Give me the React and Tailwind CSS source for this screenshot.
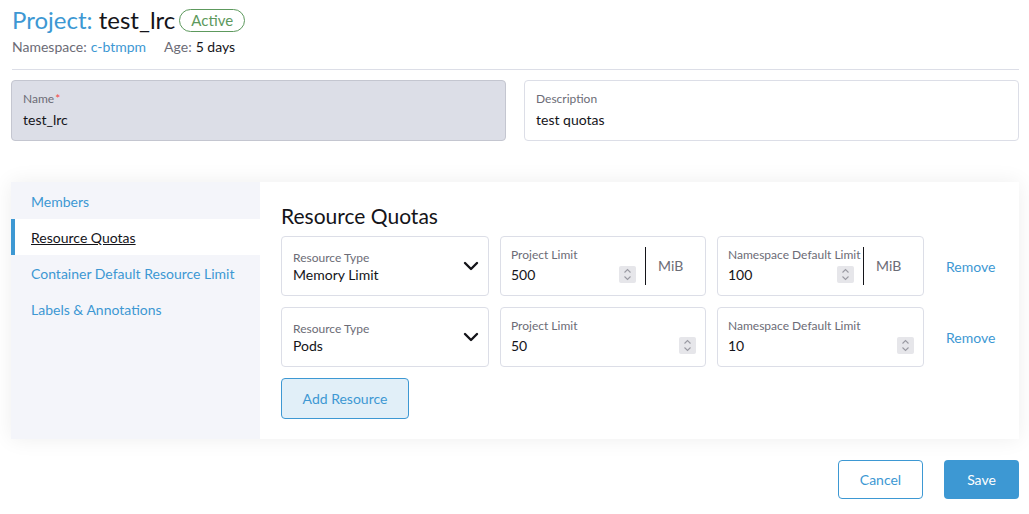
import React from "react";

const Spinner = () => (
  <span className="flex flex-col items-center justify-center w-[17px] h-[17px] bg-[#e6e6ea] rounded-[2px] shrink-0">
    <svg width="9" height="13" viewBox="0 0 9 13" fill="none" stroke="#9a9aa2" strokeWidth="1.1">
      <path d="M1.5 4.5 L4.5 1.5 L7.5 4.5" />
      <path d="M1.5 8.5 L4.5 11.5 L7.5 8.5" />
    </svg>
  </span>
);

const Chevron = () => (
  <svg width="16" height="10" viewBox="0 0 16 10" fill="none" stroke="#141419" strokeWidth="2.4" strokeLinecap="round" strokeLinejoin="round">
    <path d="M2 2 L8 8 L14 2" />
  </svg>
);

const SelectBox = ({ value }) => (
  <div className="w-[208px] h-[60px] border border-[#dcdee7] rounded-[4px] flex items-center justify-between pl-[11px] pr-[9px] bg-white">
    <div className="pt-[3px]">
      <div className="text-[12px] leading-[15px] text-[#6c6c76]">Resource Type</div>
      <div className="text-[14px] leading-[20px] text-[#141419]">{value}</div>
    </div>
    <Chevron />
  </div>
);

const NumberBox = ({ label, value, unit, width }) => (
  <div className={`${width} h-[60px] border border-[#dcdee7] rounded-[4px] flex items-stretch bg-white`}>
    <div className="flex-1 min-w-0 flex pl-[10px] pr-[9px]">
      <div className="flex-1 min-w-0 pt-[10px]">
        <div className="text-[12px] leading-[15px] text-[#6c6c76] whitespace-nowrap">{label}</div>
        <div className="text-[14px] leading-[26px] text-[#141419]">{value}</div>
      </div>
      <div className="pt-[29px]">
        <Spinner />
      </div>
    </div>
    {unit && (
      <div className="w-[60px] shrink-0 flex items-center my-[10px] border-l border-[#141419] pl-[12px] text-[14px] text-[#6c6c76]">
        <span className="-mt-[1px]">{unit}</span>
      </div>
    )}
  </div>
);

const QuotaRow = ({ type, project, ns, unit }) => (
  <div className="flex items-center gap-[11px]">
    <SelectBox value={type} />
    <NumberBox label="Project Limit" value={project} unit={unit} width="w-[206px]" />
    <NumberBox label="Namespace Default Limit" value={ns} unit={unit} width="w-[207px]" />
    <a className="ml-[11px] text-[14px] text-[#3d98d3] cursor-pointer">Remove</a>
  </div>
);

export default function App() {
  const tabs = ["Members", "Resource Quotas", "Container Default Resource Limit", "Labels & Annotations"];

  return (
    <div className="w-[1029px] h-[514px] bg-white font-['Lato','Noto_Sans',sans-serif] text-[#141419] pl-[11px] pr-[10px] overflow-hidden">
      {/* Header */}
      <div className="flex items-center pt-[4px] pl-[1px]">
        <h1 className="text-[24px] leading-[32px]">
          <span className="text-[#3d98d3]">Project: </span>
          <span>test_lrc</span>
        </h1>
        <span className="ml-[4px] border border-[#5d995d] text-[#5d995d] rounded-full px-[11px] text-[15px] leading-[21px]">
          Active
        </span>
      </div>
      <div className="flex text-[14px] leading-[18px] mt-[2px] pl-[1px]">
        <span className="text-[#6c6c76]">Namespace:</span>
        <span className="text-[#3d98d3] ml-[4px]">c-btmpm</span>
        <span className="text-[#6c6c76] ml-[18px]">Age:</span>
        <span className="ml-[4px]">5 days</span>
      </div>
      <div className="border-t border-[#dcdee7] mt-[13px] ml-[1px]" />

      {/* Name / Description */}
      <div className="flex gap-[18px] mt-[10px]">
        <div className="flex-1 h-[61px] bg-[#dcdee7] border border-[#c4c6d0] rounded-[4px] px-[11px] pt-[10px]">
          <div className="text-[12px] leading-[15px] text-[#6c6c76]">
            Name<span className="text-[#f64747] ml-[1px]">*</span>
          </div>
          <div className="text-[14px] leading-[28px] text-[#141419]">test_lrc</div>
        </div>
        <div className="flex-1 h-[61px] bg-white border border-[#dcdee7] rounded-[4px] px-[11px] pt-[10px]">
          <div className="text-[12px] leading-[15px] text-[#6c6c76]">Description</div>
          <div className="text-[14px] leading-[28px] text-[#141419]">test quotas</div>
        </div>
      </div>

      {/* Tabs panel */}
      <div className="flex mt-[41px] shadow-[0_0_20px_rgba(0,0,0,0.07)]">
        <div className="w-[249px] bg-[#f4f5fa] pt-[1px]">
          {tabs.map((t) => {
            const active = t === "Resource Quotas";
            return (
              <div
                key={t}
                className={
                  active
                    ? "h-[36px] flex items-center bg-white border-l-4 border-[#3d98d3] pl-[16px] text-[14px] text-[#141419] underline"
                    : "h-[36px] flex items-center pl-[20px] text-[14px] text-[#3d98d3]"
                }
              >
                {t}
              </div>
            );
          })}
        </div>
        <div className="flex-1 bg-white pl-[21px] pt-[20px] pb-[20px]">
          <h2 className="text-[21px] leading-[28px] mb-[6px]">Resource Quotas</h2>
          <div className="flex flex-col gap-[11px]">
            <QuotaRow type="Memory Limit" project="500" ns="100" unit="MiB" />
            <QuotaRow type="Pods" project="50" ns="10" />
            <div>
              <button className="w-[128px] h-[41px] bg-[#e1eff8] border border-[#3d98d3] rounded-[4px] text-[14px] text-[#3d98d3]">
                Add Resource
              </button>
            </div>
          </div>
        </div>
      </div>

      {/* Footer */}
      <div className="flex justify-end gap-[21px] mt-[21px]">
        <button className="w-[85px] h-[39px] border border-[#3d98d3] rounded-[4px] text-[14px] text-[#3d98d3] bg-white">
          Cancel
        </button>
        <button className="w-[75px] h-[39px] bg-[#3d98d3] rounded-[4px] text-[14px] text-white">
          Save
        </button>
      </div>
    </div>
  );
}
